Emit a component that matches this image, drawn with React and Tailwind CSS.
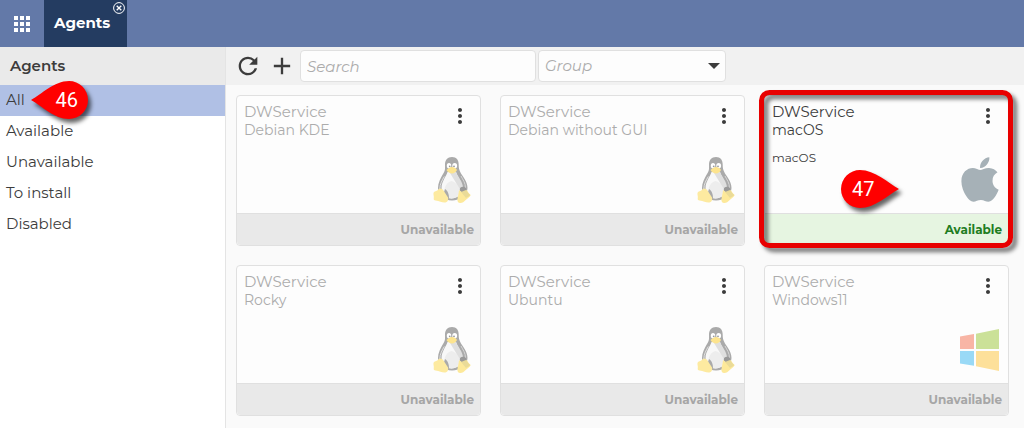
import { MdAdd, MdApps, MdMoreVert, MdRefresh } from "react-icons/md";
import { FaApple } from "react-icons/fa";

const filters = ["All", "Available", "Unavailable", "To install", "Disabled"];

const agents = [
  { name: "Debian KDE", os: "linux" },
  { name: "Debian without GUI", os: "linux" },
  { name: "macOS", os: "mac", note: "macOS", available: true },
  { name: "Rocky", os: "linux" },
  { name: "Ubuntu", os: "linux" },
  { name: "Windows11", os: "windows" },
];

function Penguin() {
  return (
    <svg viewBox="0 0 38 48" className="h-12 w-[38px]" aria-hidden="true">
      <path
        d="M19 1c-4.500 0-7 3-7 7.500 0 4 .5 6-2 9.500C7.500 22 5 27 5 32c0 7 6 12.500 14 12.500S34.500 39 34.500 32c0-6-4-10.500-6.500-14.500-2-3.500-2.300-5.500-2.300-9C25.700 4 23.500 1 19 1z"
        fill="#aaa"
      />
      <path
        d="M14.500 16c-1 4-6 9.500-6 16 0 7 4.500 10.500 10 10.500S29 39 29 32c0-7-4.500-11-6-16z"
        fill="#f8f8f8"
      />
      <path d="M18.500 25c-4 1-7 5-7 9.500 0 5 3 8 7 8s8-3 8-8c0-4.500-4-8.500-8-9.500z" fill="#ededed" />
      <path d="M23 16l-6 1 11 18 2-3c0-6-5-11-7-16z" fill="#dfdfdf" />
      <path d="M6.800 33c0-5 2.500-9 4.500-12.500" fill="none" stroke="#e2e2e2" strokeWidth="1" />
      <path d="M32.500 32c0-5-2.500-8-4.500-12" fill="none" stroke="#d6d6d6" strokeWidth="1" />
      <ellipse cx="16" cy="9.800" rx="2.200" ry="2.800" fill="#fff" />
      <ellipse cx="21.700" cy="9.800" rx="2.400" ry="2.800" fill="#fff" />
      <circle cx="16.700" cy="10.300" r=".9" fill="#999" />
      <circle cx="21" cy="10.300" r=".9" fill="#999" />
      <path d="M13.500 14c1.500-1.500 3.500-3 5.500-3s4.500 1.500 5 3c-1 2-3 3.500-5 3.500S14.500 16 13.500 14z" fill="#fde48e" />
      <path d="M12 33c3 2 4 5 4 10l-6-4z" fill="#aaa" />
      <path
        d="M1 36c1-1 3-.6 4.500-2.800C7 31.800 9.500 32.500 10.500 34.500l4.500 7c.8 3-1 5-3.500 5-3 0-5-1.500-9-2C0 44.200 1 42.500.8 40.500S0 37.500 1 36z"
        fill="#fdeaa0"
      />
      <ellipse cx="30" cy="33.500" rx="3.200" ry="2.700" fill="#999" />
      <path
        d="M26 34.500c.8-1 1.500 1.500 3.500 1.800 2 .2 3-.8 4-2.300 1.500 1 1.500 3 4.200 5-.5 2-3 3-5 5-2 1.800-3 3-5.500 3-2 0-3-1.500-2.700-4 .3-2.500 1-5 1.500-8.500z"
        fill="#fde99a"
      />
      <path d="M28 36l5-2c1.500 1 1.500 3 4.200 5-1 1.500-3 2-4.200 3z" fill="#eadb98" />
    </svg>
  );
}

function WindowsLogo() {
  return (
    <svg viewBox="0 0 39 42" className="h-[42px] w-[39px]" aria-hidden="true">
      <path d="M0 7.500L14 5v15H0z" fill="#f8b5a5" />
      <path d="M16 4.700L39 0v20H16z" fill="#cbe198" />
      <path d="M0 22h14v14.800L0 34.500z" fill="#99d9f6" />
      <path d="M16 22h23v20l-23-4.700z" fill="#fde09a" />
    </svg>
  );
}

function OsIcon({ os }) {
  if (os === "mac") return <FaApple className="h-[51px] w-[38px] text-[#a6b1b7]" aria-hidden="true" />;
  if (os === "windows") return <WindowsLogo />;
  return <Penguin />;
}

function Pin({ label, left }) {
  return (
    <span
      className={
        "pointer-events-none absolute z-20 block h-[38px] w-[60px] " +
        (left ? "left-[30px] -top-1" : "left-[75px] top-[74px]")
      }
    >
      <svg viewBox="0 0 60 38" className="absolute inset-0 h-full w-full overflow-visible drop-shadow-[3px_4px_2px_rgba(0,0,0,0.6)]" aria-hidden="true">
        <path
          d={
            left
              ? "M1 19C12 13 24 0 39 0a19 19 0 0 1 0 38C24 38 12 25 1 19z"
              : "M59 19C48 13 35 0 20 0a19 19 0 0 0 0 38C35 38 48 25 59 19z"
          }
          fill="#f00"
        />
      </svg>
      <span
        className={
          "relative flex h-full items-center font-['Roboto',sans-serif] text-xl text-white " +
          (left ? "justify-end pr-3" : "justify-start pl-3")
        }
      >
        {label}
      </span>
    </span>
  );
}

function AgentCard({ agent }) {
  const on = agent.available;
  return (
    <article
      className={
        "relative flex h-[151px] flex-col rounded border border-[#e0e0e0] bg-[#fdfdfd] " +
        (on ? "text-[#3c3c3c]" : "text-[#acacac]")
      }
    >
      <div className="flex flex-1 justify-between px-[7px]">
        <div className="pt-1.5">
          <h2 className="text-[15px] leading-5">DWService</h2>
          <p className="text-sm leading-4">{agent.name}</p>
          {agent.note && <p className="pt-3 text-xs leading-4">{agent.note}</p>}
        </div>
        <div className="flex flex-col items-end justify-between pb-2 pr-px pt-2">
          <button type="button" aria-label={"Menu for " + agent.name} className="text-[#3c3c3c]">
            <MdMoreVert className="size-6" />
          </button>
          <div className="flex h-[51px] items-center pr-px">
            <OsIcon os={agent.os} />
          </div>
        </div>
      </div>
      <footer
        className={
          "flex h-8 items-center justify-end rounded-b border-t border-[#e0e0e0] pr-1.5 text-xs font-bold " +
          (on ? "bg-[#e6f5e1] text-[#1f7d1f]" : "bg-[#e9e9e9] text-[#a6a6a6]")
        }
      >
        {on ? "Available" : "Unavailable"}
      </footer>
      {on && (
        <>
          <svg className="pointer-events-none absolute -left-1.5 -top-1.5 z-10 h-[161px] w-[257px] overflow-visible drop-shadow-[4px_4px_2px_rgba(0,0,0,0.55)]" aria-hidden="true">
            <rect x="2.500" y="2.500" width="249" height="153" rx="8" fill="none" stroke="#e80000" strokeWidth="5" />
          </svg>
          <Pin label="47" />
        </>
      )}
    </article>
  );
}

export default function App() {
  return (
    <div className="flex min-h-screen flex-col bg-[#fafafa] font-['Montserrat','Inter',sans-serif] text-[#3c3c3c]">
      <header className="flex h-[47px] bg-[#6379a8] text-white">
        <button type="button" aria-label="Applications" className="flex w-11 items-center justify-center">
          <MdApps className="size-6" />
        </button>
        <div className="relative flex w-[83px] items-center bg-[#243c61] pl-2.5">
          <span className="text-[15px] font-bold">Agents</span>
          <button type="button" aria-label="Close Agents" className="absolute right-0.5 top-0.5">
            <svg viewBox="0 0 12 12" className="size-3" fill="none" stroke="currentColor" aria-hidden="true">
              <circle cx="6" cy="6" r="5.400" />
              <path d="M3.700 3.700l4.600 4.600M8.300 3.700L3.700 8.300" strokeWidth="1.300" />
            </svg>
          </button>
        </div>
      </header>
      <div className="flex flex-1">
        <nav className="w-[226px] shrink-0 border-r border-[#e4e4e4] bg-white">
          <h1 className="flex h-[38px] items-center bg-[#eaeaea] pl-2.5 text-[15px] font-semibold">Agents</h1>
          <ul>
            {filters.map((f, i) => (
              <li key={f} className="relative">
                <button
                  type="button"
                  className={"flex h-[31px] w-full items-center pl-1.5 text-[15px] " + (i === 0 ? "bg-[#b0c0e5]" : "")}
                >
                  {f}
                </button>
                {i === 0 && <Pin label="46" left />}
              </li>
            ))}
          </ul>
        </nav>
        <main className="min-w-0 flex-1">
          <div className="flex h-[38px] items-center bg-[#f1f1f1] pl-2">
            <button type="button" aria-label="Refresh">
              <MdRefresh className="size-7" />
            </button>
            <button type="button" aria-label="Add" className="ml-1.5">
              <MdAdd className="size-7" />
            </button>
            <input
              aria-label="Search"
              placeholder="Search"
              className="ml-1 h-8 w-[236px] rounded border border-[#e0e0e0] bg-[#fdfdfd] px-1.5 text-[15px] italic placeholder:text-[#acacac]"
            />
            <div className="relative ml-0.5 w-[188px]">
              <select
                aria-label="Group"
                defaultValue=""
                className="block h-8 w-full appearance-none rounded border border-[#e0e0e0] bg-[#fdfdfd] px-1.5 text-[15px] italic text-[#acacac]"
              >
                <option value="">Group</option>
              </select>
              <svg viewBox="0 0 12 6" className="pointer-events-none absolute right-1.5 top-[13px] h-1.5 w-3" aria-hidden="true">
                <path d="M0 0h12L6 6z" fill="#3c3c3c" />
              </svg>
            </div>
          </div>
          <div className="grid grid-cols-[repeat(auto-fill,245px)] gap-[19px] py-2.5 pl-2.5">
            {agents.map((a) => (
              <AgentCard key={a.name} agent={a} />
            ))}
          </div>
        </main>
      </div>
    </div>
  );
}
